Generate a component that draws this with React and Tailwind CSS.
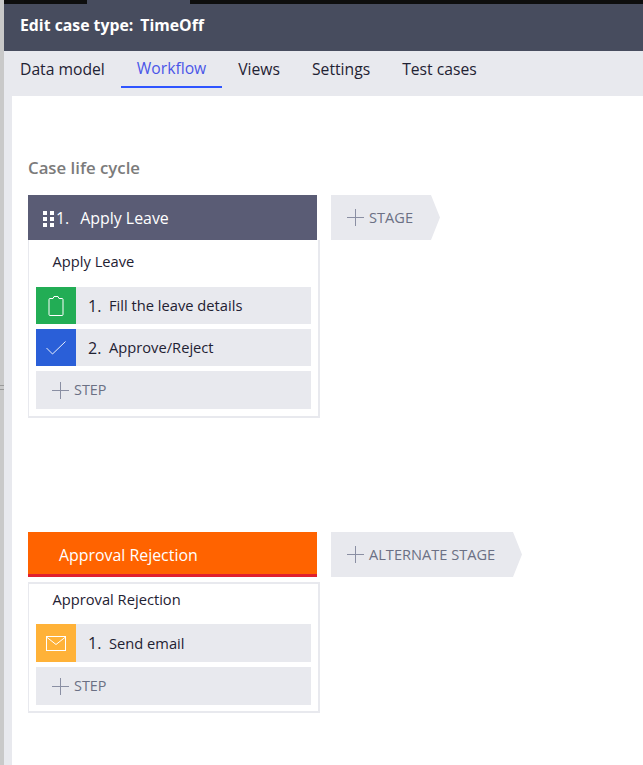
const font = { fontFamily: '"Open Sans", sans-serif' };

function Plus({ size = 17, color = "#8a8fa3" }) {
  return (
    <svg width={size} height={size} viewBox="0 0 17 17" className="shrink-0">
      <path d="M0 8.5H17M8.5 0V17" stroke={color} strokeWidth="1" fill="none" />
    </svg>
  );
}

function Clipboard() {
  return (
    <svg width="16" height="20" viewBox="0 0 16 20">
      <path d="M2 2.5H5L6 0.5H10L11 2.5H14Q15 2.5 15 3.5V18.5Q15 19.5 14 19.5H2Q1 19.5 1 18.5V3.5Q1 2.5 2 2.5Z" stroke="#fff" strokeWidth="1" fill="none" />
    </svg>
  );
}

function Check() {
  return (
    <svg width="20" height="14" viewBox="0 0 20 14">
      <path d="M0.5 7L6.5 13L19.5 0.5" stroke="#fff" strokeWidth="0.9" fill="none" />
    </svg>
  );
}

function Mail() {
  return (
    <svg width="20" height="15" viewBox="0 0 20 15">
      <rect x="0.5" y="0.5" width="19" height="14" stroke="#fff" fill="none" />
      <path d="M0.5 1L10 8.5L19.5 1" stroke="#fff" fill="none" />
    </svg>
  );
}

function Step({ color, icon, n, label, h = "h-[37px]" }) {
  return (
    <div className={`flex ${h} items-center bg-[#e8e9ee]`}>
      <div className={`flex h-full w-10 items-center justify-center ${color}`}>{icon}</div>
      <span className="ml-3 w-[13px] text-[16px] text-[#1f2233]">{n}.</span>
      <span className="ml-2 text-[14.7px] text-[#1f2233]">{label}</span>
    </div>
  );
}

function AddStep({ h }) {
  return (
    <div className={`flex ${h} items-center gap-[5px] bg-[#e8e9ee] pl-4 text-[14.4px] text-[#6b7084]`}>
      <Plus />
      <span>STEP</span>
    </div>
  );
}

function AddStage({ label, w }) {
  return (
    <div
      className={`ml-[14px] flex h-[45px] ${w} items-center gap-[5px] bg-[#e8e9ee] pl-4 text-[14.6px] text-[#6b7084] [clip-path:polygon(0_0,calc(100%-9px)_0,100%_50%,calc(100%-9px)_100%,0_100%)]`}
    >
      <Plus />
      <span>{label}</span>
    </div>
  );
}

function Grip() {
  return (
    <div className="grid grid-cols-2 gap-x-[3px] gap-y-[2px]">
      {[0, 1, 2, 3, 4, 5].map((i) => (
        <span key={i} className="h-1 w-1 bg-white" />
      ))}
    </div>
  );
}

export default function App() {
  return (
    <div className="flex h-[765px] w-[643px] overflow-hidden bg-white" style={font}>
      <div className="relative w-1 shrink-0 bg-[#c9c9c9]">
        <div className="absolute left-0 top-[385px] h-[5px] w-1 border-y border-[#9a9a9a]" />
      </div>
      <div className="flex min-w-0 flex-1 flex-col">
        <div className="flex h-1 bg-[#0e0e0e]">
          <div className="ml-[83px] w-[103px] bg-[#474c5e]" />
        </div>
        <div className="flex h-[47px] items-center bg-[#474c5e] pb-1 pl-4 text-[15.8px] font-bold text-white">
          <span>Edit case type:</span>
          <span className="ml-[7px]">TimeOff</span>
        </div>
        <div className="flex h-[45px] items-stretch bg-[#e8e9ee] pl-1 text-[15.7px] text-[#1f2233]">
          <div className="flex items-center px-3 pb-[8px]">Data model</div>
          <div className="mx-1 mb-2 flex items-center border-b-2 border-[#2f55ff] px-4 pt-px text-[#4a56e8]">Workflow</div>
          <div className="flex items-center pb-[8px] pl-3 pr-4">Views</div>
          <div className="flex items-center px-4 pb-[8px]">Settings</div>
          <div className="flex items-center px-4 pb-[8px]">Test cases</div>
        </div>
        <div className="flex min-h-0 flex-1 bg-[#e8e9ee]">
          <div className="w-2 shrink-0" />
          <div className="min-w-0 flex-1 bg-white pl-4 pt-[60px]">
            <h2 className="text-[16.8px] font-semibold leading-6 text-[#7b7b7b]">Case life cycle</h2>
            <div className="mt-[15px] flex items-start">
              <div className="w-[289px]">
                <div className="flex h-[45px] items-center bg-[#5a5c75] pl-[15px] pt-[2px] text-[15.9px] text-white">
                  <Grip />
                  <span className="ml-[2px]">1.</span>
                  <span className="ml-[11px]">Apply Leave</span>
                </div>
              </div>
              <AddStage label="STAGE" w="w-[109px]" />
            </div>
            <div className="w-[292px] border-2 border-l border-t-0 border-[#e8e9ee] pb-[7px] pl-[7px] pr-[7px]">
              <div className="flex h-[47px] items-center pb-1 pl-[16.5px] text-[14.7px] text-[#1f2233]">Apply Leave</div>
              <div className="flex flex-col gap-[5px]">
                <Step color="bg-[#22ad55]" icon={<Clipboard />} n="1" label="Fill the leave details" />
                <Step color="bg-[#2a5fd8]" icon={<Check />} n="2" label="Approve/Reject" />
                <AddStep h="h-[38px]" />
              </div>
            </div>
            <div className="mt-[114px] flex items-start">
              <div className="flex h-[45px] w-[289px] items-center border-b-[3px] border-[#e0202f] bg-[#ff6300] pl-[31px] pt-[5px] text-[15.9px] text-white">
                Approval Rejection
              </div>
              <AddStage label="ALTERNATE STAGE" w="w-[191px]" />
            </div>
            <div className="mt-[5px] w-[292px] border-2 border-l border-[#e8e9ee] pb-[6px] pl-[7px] pr-[7px]">
              <div className="flex h-[40px] items-center pb-[10px] pl-[16.5px] text-[14.7px] text-[#1f2233]">Approval Rejection</div>
              <div className="flex flex-col gap-[5px]">
                <Step color="bg-[#ffb238]" icon={<Mail />} n="1" label="Send email" h="h-[38px]" />
                <AddStep h="h-[38px]" />
              </div>
            </div>
          </div>
        </div>
      </div>
    </div>
  );
}
